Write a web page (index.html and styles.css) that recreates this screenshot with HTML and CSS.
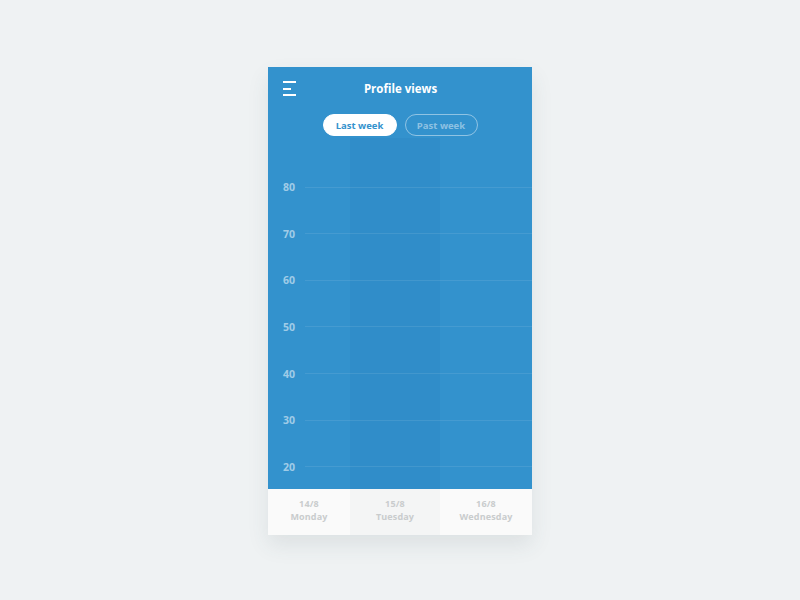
FILE: index.html
```html
<!DOCTYPE html>
<html>
<head>
<meta charset="utf-8">
<link rel="stylesheet" href="styles.css">
</head>
<body>
<div class="page">
  <div class="card">
    <div class="top">
      <div class="topbar">
        <svg class="menu" width="14" height="16" viewBox="0 0 14 16">
          <rect x="0" y="0" width="13" height="2" fill="#fff"/>
          <rect x="0" y="7" width="8" height="2" fill="#fff"/>
          <rect x="0" y="13" width="13" height="2" fill="#fff"/>
        </svg>
        <div class="title">Profile views</div>
      </div>
      <div class="toggle">
        <span class="pill active">Last week</span>
        <span class="pill past">Past week</span>
      </div>
    </div>
    <div class="chart">
      <div class="row"><span class="lab">80</span><span class="line"></span></div>
      <div class="row"><span class="lab">70</span><span class="line"></span></div>
      <div class="row"><span class="lab">60</span><span class="line"></span></div>
      <div class="row"><span class="lab">50</span><span class="line"></span></div>
      <div class="row"><span class="lab">40</span><span class="line"></span></div>
      <div class="row"><span class="lab">30</span><span class="line"></span></div>
      <div class="row"><span class="lab">20</span><span class="line"></span></div>
    </div>
    <div class="days">
      <div class="day"><span>14/8</span><span>Monday</span></div>
      <div class="day mid"><span>15/8</span><span>Tuesday</span></div>
      <div class="day"><span>16/8</span><span>Wednesday</span></div>
    </div>
  </div>
</div>
</body>
</html>
```
FILE: styles.css
```css
* { box-sizing: border-box; }
html, body { margin: 0; padding: 0; }
body {
  background: #eff2f3;
  font-family: "Open Sans", "Noto Sans", sans-serif;
  width: 800px;
  height: 600px;
  overflow: hidden;
}
.page {
  padding-top: 67px;
  display: flex;
  justify-content: center;
}
.card {
  width: 264px;
  display: flex;
  flex-direction: column;
  box-shadow: 0 10px 20px rgba(60, 80, 90, 0.10);
}
.top {
  background: #3392cd;
  padding-bottom: 1px;
}
.topbar {
  height: 43px;
  display: flex;
  align-items: center;
  justify-content: center;
  position: relative;
}
.menu {
  position: absolute;
  left: 15px;
  top: 14px;
}
.title {
  color: #fff;
  font-weight: 700;
  font-size: 11.5px;
  margin-left: 1px;
}
.toggle {
  display: flex;
  justify-content: center;
  gap: 8px;
  padding-top: 4px;
  height: 27px;
}
.pill {
  height: 22px;
  width: 74px;
  border-radius: 11px;
  display: flex;
  align-items: center;
  justify-content: center;
  font-size: 9.5px;
  font-weight: 700;
  border: 1.5px solid rgba(255, 255, 255, 0.45);
  color: rgba(255, 255, 255, 0.45);
}
.pill.past { width: 73px; }
.pill.active {
  background: #fff;
  border-color: #fff;
  color: #3392cd;
}
.chart {
  background: linear-gradient(to right, #3392cd 0, #3392cd 82px, #308dc9 82px, #308dc9 172px, #3392cd 172px);
  padding-top: 42px;
  padding-bottom: 15px;
  display: flex;
  flex-direction: column;
  gap: 32.67px;
}
.row {
  height: 14px;
  display: flex;
  align-items: center;
}
.lab {
  width: 37px;
  padding-left: 15px;
  font-size: 10.5px;
  font-weight: 700;
  color: rgba(255, 255, 255, 0.55);
}
.line {
  flex: 1;
  height: 1px;
  background: rgba(255, 255, 255, 0.09);
}
.days {
  height: 46px;
  display: grid;
  grid-template-columns: 82px 90px 92px;
  background: #fafafa;
}
.day {
  display: flex;
  flex-direction: column;
  align-items: center;
  justify-content: center;
  font-size: 9px;
  font-weight: 700;
  color: #c9cccd;
  line-height: 12.5px;
  letter-spacing: 0.15px;
  padding-bottom: 2px;
}
.day.mid { background: #f4f5f5; }
```
